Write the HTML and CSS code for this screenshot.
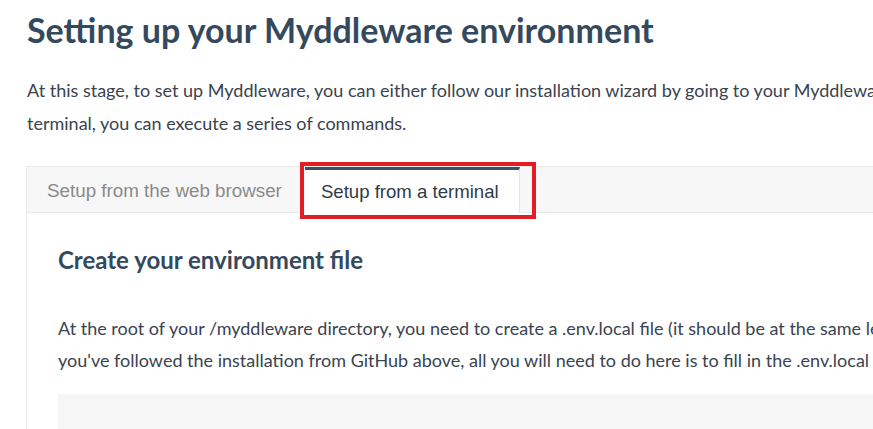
FILE: index.html
```html
<!DOCTYPE html>
<html lang="en">
<head>
<meta charset="utf-8">
<title>Setting up your Myddleware environment</title>
<link rel="stylesheet" href="styles.css">
</head>
<body>
<main class="page">
  <h1 class="title">Setting up your Myddleware environment</h1>
  <p class="intro">At this stage, to set up Myddleware, you can either follow our installation wizard by going to your Myddleware URL in your browser or, if you prefer using a<br>terminal, you can execute a series of commands.</p>
  <div class="tabs">
    <div class="tab-bar">
      <div class="tab">Setup from the web browser</div>
      <div class="tab tab-active">Setup from a terminal<span class="highlight"></span></div>
    </div>
    <div class="tab-panel">
      <h3 class="panel-title">Create your environment file</h3>
      <p class="panel-text">At the root of your /myddleware directory, you need to create a .env.local file (it should be at the same level as your .env file). If<br>you've followed the installation from GitHub above, all you will need to do here is to fill in the .env.local file with your database credentials.</p>
      <div class="code-block"></div>
    </div>
  </div>
</main>
</body>
</html>
```
FILE: styles.css
```css
html, body {
  margin: 0;
  padding: 0;
  background: #ffffff;
  overflow: hidden;
}

.page {
  width: 1300px;
  padding: 10px 0 0 27px;
  font-family: "Lato", "Liberation Sans", sans-serif;
}

.title {
  margin: 0;
  font-size: 34px;
  line-height: 1.2;
  font-weight: 700;
  color: #34495e;
}

.intro {
  margin: 23px 0 0 0;
  font-size: 18px;
  line-height: 33px;
  color: #3a4350;
  white-space: nowrap;
}

.tabs {
  margin-top: 26px;
  margin-left: -1px;
  border-top: 1px solid #e9e9e9;
  border-left: 1px solid #e9e9e9;
}

.tab-bar {
  display: flex;
  background: #f7f7f7;
  border-bottom: 1px solid #e9e9e9;
  font-family: "Liberation Sans", Arial, sans-serif;
  font-size: 18.8px;
}

.tab {
  height: 45px;
  box-sizing: border-box;
  padding: 3px 23px 0 20px;
  line-height: 42px;
  color: #8a8a8a;
  white-space: nowrap;
}

.tab-active {
  position: relative;
  background: #ffffff;
  color: #2f3b48;
  border-top: 3px solid #3d5166;
  border-right: 1px solid #e5e5e5;
  margin-bottom: -1px;
  height: 46px;
  padding: 3px 20px 3px 16px;
  line-height: 37px;
  font-size: 18.6px;
}

.highlight {
  position: absolute;
  left: -5px;
  top: -8px;
  right: -17px;
  bottom: -6px;
  border: 4px solid #e31d25;
}

.tab-panel {
  padding: 33px 0 0 31px;
}

.panel-title {
  margin: 0;
  font-size: 24px;
  line-height: 1.2;
  font-weight: 700;
  color: #34495e;
}

.panel-text {
  margin: 37px 0 0 0;
  font-size: 18px;
  line-height: 32px;
  color: #3a4350;
  white-space: nowrap;
}

.code-block {
  margin-top: 18px;
  height: 60px;
  background: #f6f6f6;
}
```
